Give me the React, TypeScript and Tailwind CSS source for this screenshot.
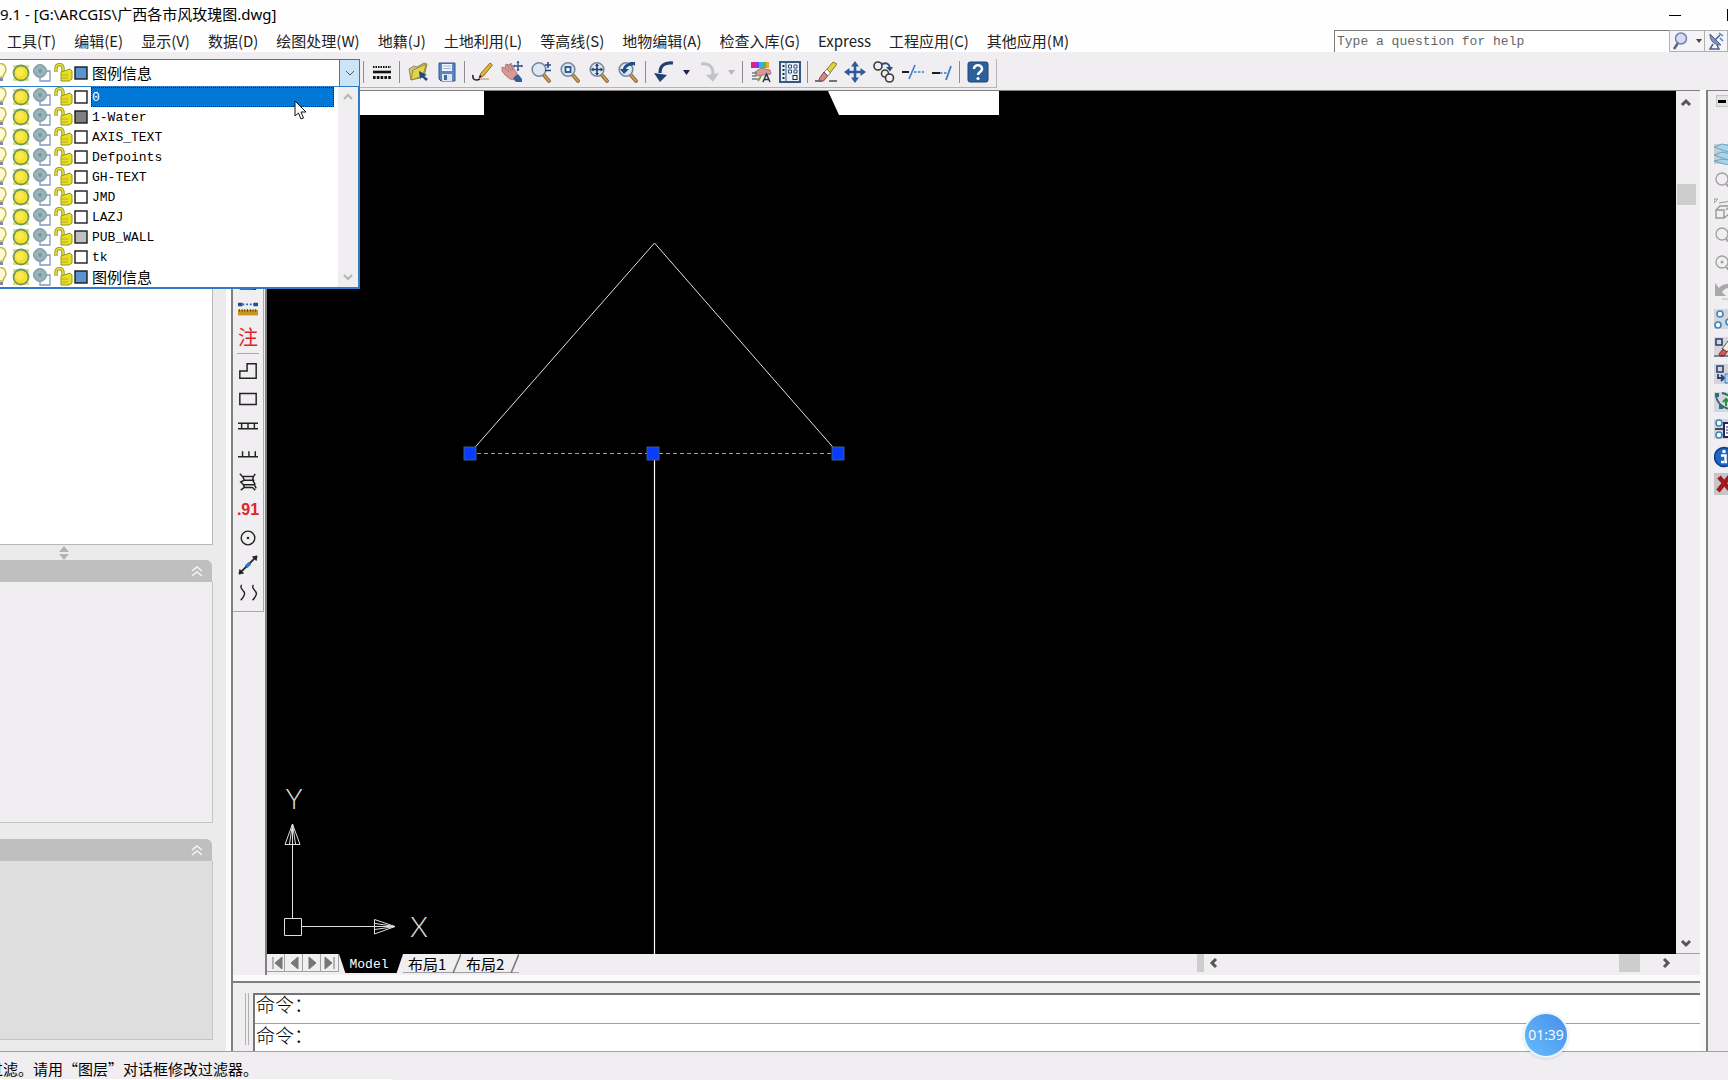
import React, { useState } from 'react';

type Layer = { name: string; color: string; cjk?: boolean };

const layers: Layer[] = [
  { name: '0', color: '#ffffff' },
  { name: '1-Water', color: '#808080' },
  { name: 'AXIS_TEXT', color: '#ffffff' },
  { name: 'Defpoints', color: '#ffffff' },
  { name: 'GH-TEXT', color: '#ffffff' },
  { name: 'JMD', color: '#ffffff' },
  { name: 'LAZJ', color: '#ffffff' },
  { name: 'PUB_WALL', color: '#c0c0c0' },
  { name: 'tk', color: '#ffffff' },
  { name: '图例信息', color: '#5b94cf', cjk: true },
];

const menus = [
  '工具(T)', '编辑(E)', '显示(V)', '数据(D)', '绘图处理(W)', '地籍(J)', '土地利用(L)', '等高线(S)',
  '地物编辑(A)', '检查入库(G)', 'Express', '工程应用(C)', '其他应用(M)',
];

const Svg: React.FC<{ size?: number; children: React.ReactNode }> = ({ size = 22, children }) => (
  <svg width={size} height={size} viewBox="0 0 22 22" fill="none" className="shrink-0" aria-hidden="true">
    {children}
  </svg>
);

/* ---------- layer state icons ---------- */

const LayerIcons: React.FC<{ color: string }> = ({ color }) => (
  <span className="-ml-[10px] flex shrink-0 items-center">
    <svg width="21" height="20" viewBox="0 0 21 20" fill="none" aria-hidden="true">
      <path d="M5 7a5 6 0 0 1 11 0c0 3-3 4-3 7H8c0-3-3-4-3-7z" fill="#fffbd0" stroke="#c9b64a" strokeWidth="1.5" />
      <path d="M8 15h5v3H8z" fill="#7d86a5" />
    </svg>
    <svg width="21" height="20" viewBox="0 0 21 20" aria-hidden="true">
      <path d="M2 2h4v3H2zM14 2h4v3h-4zM2 15h4v3H2zM14 15h4v3h-4z" fill="#dfe08a" />
      <circle cx="10" cy="10" r="7.5" fill="#f3e02f" stroke="#6f9a58" strokeWidth="1.8" />
      <circle cx="9" cy="9" r="4" fill="#fbe94e" />
    </svg>
    <svg width="21" height="20" viewBox="0 0 21 20" fill="none" aria-hidden="true">
      <path d="M10 8h8v10H8v-4" fill="#fff" stroke="#8195c4" strokeWidth="1.3" />
      <circle cx="8" cy="8" r="6.5" fill="#93adb5" stroke="#7f9aa8" />
      <path d="M8 3v10M3 8h10M5 5l6 6M11 5l-6 6" stroke="#aac3bd" strokeWidth="1" />
      <circle cx="8" cy="8" r="2" fill="#7896a2" />
    </svg>
    <svg width="21" height="20" viewBox="0 0 21 20" fill="none" aria-hidden="true">
      <path d="M3 9V5a3 3 0 0 1 7 0v5" stroke="#9a9b1c" strokeWidth="3.4" />
      <path d="M3 9V5a3 3 0 0 1 7 0v5" stroke="#e9e64c" strokeWidth="1.4" />
      <path d="M8 9l9-3 2 2v8l-3 2H8z" fill="#e6df24" stroke="#989617" />
      <path d="M9 12h6M9 15h6" stroke="#b5ae18" />
    </svg>
    <svg width="14" height="14" viewBox="0 0 14 14" aria-hidden="true">
      <rect x="1" y="1" width="12" height="12" fill={color} stroke="#1a1a1a" strokeWidth="1.4" />
    </svg>
  </span>
);

/* ---------- top toolbar icons ---------- */

const LineweightIcon = () => (
  <Svg>
    <path d="M2 6h18" stroke="#111" strokeWidth="2" strokeDasharray="1.5 1" />
    <path d="M2 11h18" stroke="#111" strokeWidth="2.6" />
    <path d="M2 16.500h18" stroke="#111" strokeWidth="3" strokeDasharray="2.6 1.200" />
  </Svg>
);

const OpenIcon = () => (
  <Svg>
    <path d="M2 8l5-3 3 1 7-4 3 1-3 13-13 3z" fill="#c9c583" stroke="#8d8a58" />
    <path d="M6 9l13-6-3 12-12 4z" fill="#e3d24c" stroke="#9a8c32" />
    <path d="M12 10l1 8 2-2 4 4 2-2-4-3 3-1z" fill="#23467c" />
  </Svg>
);

const SaveIcon = () => (
  <Svg>
    <path d="M3 2h16v18H5l-2-2z" fill="#5b86bf" stroke="#33598f" />
    <path d="M6 3h10v7H6z" fill="#f1f5fa" />
    <path d="M7 5h8M7 7.500h8" stroke="#9db4d3" />
    <path d="M6 13h10v7H6z" fill="#dbe5f1" />
    <path d="M8 14h3v5H8z" fill="#44699d" />
  </Svg>
);

const PencilIcon = () => (
  <Svg>
    <path d="M1 14c-1 5 3 6 7 4" stroke="#222" strokeWidth="1.600" />
    <path d="M8 18h9" stroke="#d5a49c" strokeWidth="1.600" />
    <path d="M7 17l2-5 9-10 2.500 2-9 11z" fill="#e3b03c" stroke="#94702a" />
    <path d="M7 17l1-3 2 1.500z" fill="#222" />
  </Svg>
);

const PanIcon = () => (
  <Svg>
    <path d="M1 6l3 1 1-4 3 1 2-2 3 6 3 4-2 7-5-1-5-4-3-4z" fill="#d49a97" stroke="#a66c6c" strokeWidth=".8" />
    <path d="M4 7l4 4M6 4l4 6M9 3l3 6" stroke="#a66c6c" strokeWidth=".8" />
    <path d="M12 17l5-4 4 5v3h-6z" fill="#335d9c" />
    <path d="M17 0v10M12.500 5h9" stroke="#2d5691" strokeWidth="1.400" />
    <path d="M17 0l-1.500 2h3zM17 10l-1.500-2h3zM12 5l2-1.500v3zM22 5l-2-1.500v3z" fill="#2d5691" />
  </Svg>
);

const Lens: React.FC<{ children?: React.ReactNode }> = ({ children }) => (
  <Svg>
    <path d="M13 13l6 7" stroke="#7b5a2b" strokeWidth="3.600" strokeLinecap="round" />
    <path d="M14 14l5 6" stroke="#cf9a4b" strokeWidth="2" strokeLinecap="round" />
    <circle cx="9" cy="8.500" r="6.800" fill="#dfe8f2" stroke="#77879c" strokeWidth="1.600" />
    {children}
  </Svg>
);

const ZoomRealtimeIcon = () => (
  <Lens>
    <path d="M15 4h6M18 1v6M15 9.500h6" stroke="#234b87" strokeWidth="1.600" />
  </Lens>
);

const ZoomWindowIcon = () => (
  <Lens>
    <rect x="6.500" y="6" width="5" height="5" fill="#fff" stroke="#23508f" strokeWidth="1.800" />
  </Lens>
);

const ZoomExtentsIcon = () => (
  <Lens>
    <path d="M9 3v11M3.500 8.500h11" stroke="#1f4173" strokeWidth="1.600" />
    <path d="M9 2.500l-2 2.500h4zM9 14.500L7 12h4zM3 8.500l2.500-2v4zM15 8.500l-2.500-2v4z" fill="#1f4173" />
  </Lens>
);

const ZoomPrevIcon = () => (
  <Lens>
    <path d="M7 10c0-4 3-7 9-7" stroke="#1f4b87" strokeWidth="3" />
    <path d="M3 8h9l-5 5z" fill="#1f4b87" />
    <path d="M12 1h6v4z" fill="#1f4b87" />
  </Lens>
);

const UndoIcon = () => (
  <Svg>
    <path d="M20 2C11 1 7 5 7 12" stroke="#1f4275" strokeWidth="3.200" />
    <path d="M1 12l6 9 7-7z" fill="#1f4275" />
  </Svg>
);

const RedoIcon = () => (
  <Svg>
    <path d="M3 3c9-1 12 3 12 10" stroke="#c3c3c6" strokeWidth="3" />
    <path d="M21 12l-6 9-7-7z" fill="#c3c3c6" />
  </Svg>
);

const MatchPropsIcon = () => (
  <Svg>
    <path d="M1 1h4v6H1z" fill="#e0218a" />
    <path d="M5 1h4v6H5z" fill="#7b3ff2" />
    <path d="M9 1h4v6H9z" fill="#29b6e8" />
    <path d="M13 1h3v6h-3z" fill="#45c23e" />
    <path d="M16 1h3v6h-3z" fill="#f2a51e" />
    <path d="M5 11l6-4 9 2 1 4-7 1-8 1z" fill="#d69a95" stroke="#9c5f5f" strokeWidth=".8" />
    <path d="M2 12h5M2 15h4M2 18h6" stroke="#6d7f8c" strokeWidth="1.500" />
    <path d="M8 20l3-5" stroke="#7f9f3d" strokeWidth="2" />
    <path d="M13 21l3.500-8 3.500 8M14 18.500h5" stroke="#26324d" strokeWidth="1.500" />
  </Svg>
);

const PaletteIcon = () => (
  <Svg>
    <rect x="1" y="1" width="20" height="20" fill="#e9f0f7" stroke="#35597f" strokeWidth="2" />
    <path d="M7 2v18" stroke="#35597f" />
    <path d="M4.500 4v15" stroke="#1d2b3d" strokeWidth="2" strokeDasharray="2 2" />
    <path d="M9.500 4h3v3h-3zM15 4h3v3h-3zM9.500 9h3v3h-3zM15 9h3v3h-3z" fill="#fff" stroke="#2c4f80" />
    <rect x="14" y="14.500" width="4" height="4" fill="#fff" stroke="#222" />
  </Svg>
);

const EraseIcon = () => (
  <Svg>
    <path d="M0 20h7M14 20h8" stroke="#4d4d4d" strokeWidth="1.400" />
    <path d="M12 8l6-7 4 2-7 9z" fill="#e6cf3c" stroke="#8f7d22" />
    <path d="M9 11l3-3 3.500 4-3 3z" fill="#fbfbfb" stroke="#666" strokeWidth=".8" />
    <path d="M4 18l5-7 3.500 4-4 5H5z" fill="#d08a80" stroke="#7d4640" />
  </Svg>
);

const MoveIcon = () => (
  <Svg>
    <path d="M11 3v16M3 11h16" stroke="#2c5c9a" strokeWidth="2.600" />
    <path d="M11 0L7 5.500h8zM11 22l-4-5.500h8zM0 11l5.500-4v8zM22 11l-5.500-4v8z" fill="#2c5c9a" />
  </Svg>
);

const CopyIcon = () => (
  <Svg>
    <circle cx="5" cy="5" r="4" stroke="#3a3a3a" strokeWidth="1.600" />
    <circle cx="12" cy="12.500" r="3.500" stroke="#3a3a3a" strokeWidth="1.600" />
    <circle cx="16.500" cy="17" r="4" fill="#f0eef0" stroke="#3a3a3a" strokeWidth="1.600" />
    <path d="M9 3c5-2 7 0 8 4" stroke="#24508e" strokeWidth="2" />
    <path d="M13 6h7l-3 4.500z" fill="#24508e" />
  </Svg>
);

const TrimIcon = () => (
  <Svg>
    <path d="M0 11h7" stroke="#1d1d1d" strokeWidth="2" />
    <path d="M7 18l6-14" stroke="#3b7cc9" strokeWidth="1.600" />
    <path d="M12 11h10" stroke="#3b7cc9" strokeWidth="1.600" strokeDasharray="2.500 1.500" />
  </Svg>
);

const ExtendIcon = () => (
  <Svg>
    <path d="M1 12h8" stroke="#1d1d1d" strokeWidth="2" />
    <path d="M9 12h7" stroke="#3b7cc9" strokeWidth="1.600" strokeDasharray="2.500 1.500" />
    <path d="M15 19l5-14" stroke="#3b7cc9" strokeWidth="1.800" />
  </Svg>
);

const HelpIcon = () => (
  <Svg>
    <rect x="1" y="1" width="20" height="20" rx="2" fill="#2b609d" stroke="#1c4679" />
    <path d="M7 8c0-5 8-5 8 0 0 3-4 3-4 6" stroke="#fff" strokeWidth="2.600" />
    <circle cx="11" cy="17.500" r="1.600" fill="#fff" />
  </Svg>
);

/* ---------- drawing toolbar icons ---------- */

const drawTools: { label: string; icon: React.ReactNode }[] = [
  { label: '多点房屋', icon: <Svg size={20}><path d="M2 19V11h8V3h10v16z" stroke="#222" strokeWidth="1.600" /></Svg> },
  { label: '四点房屋', icon: <Svg size={20}><path d="M2 5h18v12H2z" stroke="#222" strokeWidth="1.600" /></Svg> },
  { label: '依比例围墙', icon: <Svg size={20}><path d="M0 8h22M0 14h22M4 8v6M11 8v6M18 8v6" stroke="#222" strokeWidth="1.600" /></Svg> },
  { label: '陡坎', icon: <Svg size={20}><path d="M0 14h22M5 14V8M12 14V8M19 14V8" stroke="#222" strokeWidth="1.600" /></Svg> },
  {
    label: '电力线',
    icon: (
      <Svg size={20}>
        <path d="M2 2l3 3h12l2-3M5 5l2 4h11M7 9l-4 2 3 3h12l2 4M17 5l-1 4 3 5M6 14l1 3h9M3 20l4-3M16 17l3 3" stroke="#222" strokeWidth="1.600" />
      </Svg>
    ),
  },
  { label: '高程点', icon: <span className="font-['Liberation_Sans_Narrow','Liberation_Sans',sans-serif] text-base font-bold leading-4 text-[#e0242b]">.91</span> },
  { label: '控制点', icon: <Svg size={20}><circle cx="11" cy="11" r="7.500" stroke="#222" strokeWidth="1.500" /><circle cx="11" cy="11" r="1.400" fill="#222" /></Svg> },
  {
    label: '查询距离',
    icon: (
      <Svg size={20}>
        <path d="M2 20L20 2" stroke="#222" strokeWidth="2" />
        <path d="M1 21l1-5 4 4zM21 1l-1 5-4-4z" fill="#222" stroke="#222" />
        <path d="M9 13l4-4" stroke="#2f78c4" strokeWidth="4" />
      </Svg>
    ),
  },
  {
    label: '自然斜坡',
    icon: (
      <Svg size={20}>
        <path d="M4 2c-4 5 5 6 3 11-1 3-2 4-4 6M17 2c-4 5 5 6 3 11-1 3-2 4-4 6" stroke="#222" strokeWidth="1.500" />
      </Svg>
    ),
  },
];

/* ---------- right palette icons, cut by the window edge ---------- */

const grayLens = (
  <>
    <circle cx="8" cy="9" r="6" stroke="#a3a3a3" strokeWidth="1.400" />
    <path d="M12 14l4 4" stroke="#a3a3a3" strokeWidth="2" />
  </>
);

const paletteTools: { label: string; icon: React.ReactNode }[] = [
  {
    label: '图层',
    icon: <><path d="M0 1h22v20H0z" fill="#c9cdd2" /><path d="M0 4l8-3 14 3-8 5zM0 12l8-3 14 3-8 5zM0 18l9-2 13 2-8 4z" fill="#a8d5ec" stroke="#6ba3c4" /></>,
  },
  { label: '缩放', icon: grayLens },
  { label: '视图', icon: <><path d="M2 12h8v8H2zM2 12l4-4h10l-4 4M10 20l5-4" stroke="#999" strokeWidth="1.400" /><path d="M0 1h4L0 5zM5 5l12-2" stroke="#999" /></> },
  { label: '窗口缩放', icon: grayLens },
  { label: '中心缩放', icon: <>{grayLens}<circle cx="8" cy="9" r="1.500" fill="#a3a3a3" /></> },
  { label: '返回', icon: <><path d="M1 3v13h11l-4-4c2-3 6-5 12-4V4C14 3 8 4 5 8z" fill="#a9a9a9" /><path d="M8 19h14" stroke="#bbb" /></> },
  {
    label: '节点',
    icon: <><path d="M0 1h22v20H0z" fill="#d3d6da" /><circle cx="6" cy="6" r="3" fill="#fff" stroke="#3d83bd" strokeWidth="1.600" /><circle cx="15" cy="14" r="3" fill="#fff" stroke="#3d83bd" strokeWidth="1.600" /><circle cx="4" cy="17" r="3" fill="#fff" stroke="#3d83bd" strokeWidth="1.600" /></>,
  },
  {
    label: '删除',
    icon: <><path d="M0 1h22v20H0z" fill="#d3d6da" /><path d="M2 3h6v6H2z" stroke="#2c3e73" strokeWidth="1.600" /><path d="M8 13l6-8 6 2-7 9z" fill="#f4efe0" stroke="#555" /><path d="M5 18l4-5 4 3-3 4H6z" fill="#d2555c" stroke="#7d3036" /><path d="M0 20h22" stroke="#333" /></>,
  },
  {
    label: '移动',
    icon: <><path d="M0 1h22v20H0z" fill="#d3d6da" /><path d="M3 3h6v6H3z" stroke="#2c3e73" strokeWidth="1.600" /><path d="M4 11v4h5M7 12l3 3-3 3" stroke="#2c3e73" strokeWidth="1.800" /><path d="M11 11h11v9H11z" fill="#a9d3ee" stroke="#3f7fb8" /></>,
  },
  {
    label: '弧段',
    icon: <><path d="M0 1h22v20H0z" fill="#d3d6da" /><path d="M2 3c0 8 6 14 14 15M8 2c6 1 10 5 12 10" stroke="#33646d" strokeWidth="1.800" /><path d="M1 2h4v4H1zM5 14h4v4H5z" fill="#2a6f86" /><path d="M12 15V8M9 11l3-3 3 3" stroke="#2c9243" strokeWidth="2" /></>,
  },
  {
    label: '属性表',
    icon: <><path d="M0 1h22v20H0z" fill="#d3d6da" /><circle cx="5" cy="5" r="3" fill="#fff" stroke="#3d83bd" strokeWidth="1.600" /><circle cx="5" cy="17" r="3" fill="#fff" stroke="#3d83bd" strokeWidth="1.600" /><path d="M1 11h8" stroke="#222" strokeWidth="1.600" /><path d="M10 5h12v14H10z" fill="#fff" stroke="#1c2d66" strokeWidth="2" /><path d="M12 9h8M12 12h8M12 15h8" stroke="#222" /></>,
  },
  {
    label: '信息',
    icon: <><circle cx="10" cy="11" r="9.500" fill="#1f63c7" stroke="#0e3a86" strokeWidth="1.500" /><circle cx="10" cy="5.500" r="1.800" fill="#fff" /><path d="M7 9.500h4.500V16H13M7 16h3" stroke="#fff" strokeWidth="2.400" /></>,
  },
  { label: '关闭', icon: <><path d="M0 0h22v22H0z" fill="#c6c4c6" /><path d="M5 4l11 13M16 3L4 18" stroke="#a3181c" strokeWidth="4.500" /></> },
];

/* ---------- small parts ---------- */

const Separator = () => (
  <span className="flex w-[7px] shrink-0 justify-center">
    <span className="h-[22px] w-px bg-[#8c8c8c]"></span>
  </span>
);

const ToolButton: React.FC<{ label: string; children: React.ReactNode }> = ({ label, children }) => (
  <button type="button" aria-label={label} className="flex h-7 w-[29px] shrink-0 items-center justify-center hover:bg-[#dcdcdc]">
    {children}
  </button>
);

const Chevron: React.FC<{ d: string; color?: string; thick?: number }> = ({ d, color = '#555', thick = 2 }) => (
  <svg width="12" height="12" viewBox="0 0 12 12" fill="none" aria-hidden="true">
    <path d={d} stroke={color} strokeWidth={thick} />
  </svg>
);

const UP = 'M2 8l4-4 4 4';
const DOWN = 'M2 4l4 4 4-4';
const LEFT = 'M8 2L4 6l4 4';
const RIGHT = 'M4 2l4 4-4 4';

const PanelHeader: React.FC<{ label: string }> = ({ label }) => (
  <button type="button" aria-label={label} className="flex h-[22px] w-[212px] items-center justify-end rounded-tr-md bg-[#bfbfbf] pr-2">
    <svg width="14" height="14" viewBox="0 0 14 14" fill="none" aria-hidden="true">
      <path d="M2 7l5-4 5 4M2 12l5-4 5 4" stroke="#f5f5f5" strokeWidth="1.600" />
    </svg>
  </button>
);

const LayerCombo: React.FC = () => {
  const [current, setCurrent] = useState('图例信息');
  const [hovered, setHovered] = useState('0');
  const [open, setOpen] = useState(true);
  const color = layers.find((l) => l.name === current)?.color ?? '#ffffff';

  return (
    <div className="relative h-[28px] w-[360px] shrink-0 border-y border-r border-[#2f7cc4] bg-white">
      <div className="flex h-full items-center">
        <LayerIcons color={color} />
        <select
          aria-label="图层"
          value={current}
          onChange={(e) => setCurrent(e.target.value)}
          className="h-full min-w-0 flex-1 appearance-none bg-white pl-1 text-[15px] text-black outline-none"
        >
          {layers.map((l) => (
            <option key={l.name}>{l.name}</option>
          ))}
        </select>
        <button
          type="button"
          aria-label="展开图层列表"
          onClick={() => setOpen(!open)}
          className="flex h-full w-5 items-center justify-center border-l border-[#2f7cc4] bg-[#cce4f7]"
        >
          <Chevron d={DOWN} thick={1} />
        </button>
      </div>

      {open && (
        <div className="absolute left-0 top-[27px] z-20 flex w-[360px] border-b-2 border-r-2 border-[#2f7cc4] bg-white text-black">
          <ul className="min-w-0 flex-1">
            {layers.map((l) => (
              <li key={l.name} className="flex h-5 items-center">
                <LayerIcons color={l.color} />
                <button
                  type="button"
                  onMouseEnter={() => setHovered(l.name)}
                  onClick={() => setCurrent(l.name)}
                  className={
                    hovered === l.name
                      ? "ml-[3px] mr-1 h-5 flex-1 border border-dotted border-[#222] bg-[#0078d7] text-left font-['Liberation_Mono','Noto_Sans_CJK_SC',monospace] text-[13px] leading-5 text-white"
                      : l.cjk
                        ? 'ml-1 mr-1 flex-1 text-left text-[15px] leading-5'
                        : "ml-1 mr-1 h-5 flex-1 text-left font-['Liberation_Mono','Noto_Sans_CJK_SC',monospace] text-[13px] leading-[22px]"
                  }
                >
                  {l.name}
                </button>
              </li>
            ))}
          </ul>
          <div className="flex w-5 flex-col items-center justify-between bg-[#f0eef0] py-1">
            <Chevron d={UP} color="#b5b5b5" />
            <Chevron d={DOWN} color="#b5b5b5" />
          </div>
        </div>
      )}
    </div>
  );
};

const Grip: React.FC<{ x: number; y: number }> = ({ x, y }) => (
  <rect x={x - 6} y={y - 6} width="12" height="13" fill="#0a3cff" stroke="#3d5a8c" />
);

const Drawing: React.FC = () => (
  <svg width="100%" height="863" fill="none" className="block" aria-label="绘图区">
    <path d="M93 0h124v24H93zM561 0h171v24H572z" fill="#fff" />
    <path d="M203 362L387.500 152 571 362" stroke="#e0e0e0" />
    <path d="M387.500 362v501" stroke="#fff" strokeWidth="1.200" />
    <path d="M203 362.500h368" stroke="#9ca0bb" strokeDasharray="4 3" />
    <Grip x={203} y={362} />
    <Grip x={386} y={362} />
    <Grip x={571} y={362} />

    <g stroke="#e0e0e0">
      <path d="M17.500 827.500h17v17h-17zM25.500 827v-73M34 835.500h73" />
      <path d="M25.500 733l-7.500 20.500h15zM25.500 733l-3 20M25.500 733l3 20M25.500 733v20" />
      <path d="M128 835.500l-20.500-7v14.500zM128 835.500l-20-3M128 835.500l-20 3M128 835.500h-20" />
    </g>
    <g fill="#e0e0e0" fontSize="28" fontFamily="Lato, sans-serif" fontWeight="300" textAnchor="middle">
      <text x="27" y="718">Y</text>
      <text x="152" y="846">X</text>
    </g>
  </svg>
);

const LayoutTabs: React.FC = () => {
  const nav = [
    { label: '第一个布局', d: 'M4 1v12M13 1v12L6 7z' },
    { label: '上一个布局', d: 'M11 1v12L4 7z' },
    { label: '下一个布局', d: 'M4 1v12l7-6z' },
    { label: '最后一个布局', d: 'M11 1v12M2 1v12l7-6z' },
  ];
  return (
    <div className="flex h-[21px] min-w-0 flex-1 items-start text-black">
      {nav.map((n) => (
        <button key={n.label} type="button" aria-label={n.label} className="flex h-[18px] w-[18px] items-center justify-center border-b border-r border-[#a0a0a0]">
          <svg width="14" height="14" viewBox="0 0 14 14" aria-hidden="true">
            <path d={n.d} fill="#777" stroke="#777" />
          </svg>
        </button>
      ))}
      <button type="button" className="h-[19px] w-[64px] bg-black pr-1 font-['Liberation_Mono',monospace] text-[13px] leading-[22px] text-white [clip-path:polygon(0_0,100%_0,90%_100%,10%_100%)]">
        Model
      </button>
      {['布局1', '布局2'].map((t) => (
        <button key={t} type="button" className="flex h-[19px] w-[58px] items-start justify-between border-b border-[#a0a0a0] pl-[5px] text-[15px] leading-[19px]">
          {t}
          <svg width="9" height="19" viewBox="0 0 9 19" fill="none" aria-hidden="true">
            <path d="M9 0L1 19" stroke="#777" strokeWidth="1.500" />
          </svg>
        </button>
      ))}
    </div>
  );
};

const App: React.FC = () => {
  return (
    <div
      lang="zh-CN"
      className="relative flex min-h-screen flex-col overflow-hidden bg-[#f0eef0] font-['Noto_Sans_CJK_SC','Open_Sans',sans-serif] text-[15px] text-[#222]"
    >
      <header className="flex h-[30px] items-center bg-[#fefefe]">
        <h1 className="flex-1 whitespace-nowrap pb-0.5 font-['Noto_Sans','Noto_Sans_CJK_SC',sans-serif] text-[15px] leading-7 text-black">9.1 - [G:\ARCGIS\广西各市风玫瑰图.dwg]</h1>
        <button type="button" aria-label="最小化" className="mr-[46px] flex h-full w-3 items-center">
          <span className="h-px w-3 bg-black"></span>
        </button>
        <button type="button" aria-label="最大化" className="h-3 w-px bg-black"></button>
      </header>

      <div className="flex h-[22px] items-center bg-[#fefefe]">
        <nav className="flex flex-1 gap-[18px] whitespace-nowrap pl-[7px] text-[15px]">
          {menus.map((m) => (
            <button key={m} type="button" className="leading-[22px] hover:bg-[#cce4f7]">{m}</button>
          ))}
        </nav>
        <input
          type="text"
          aria-label="Type a question for help"
          placeholder="Type a question for help"
          className="h-full w-[335px] border-l border-t border-[#7a7a7a] bg-white pl-0.5 font-['Liberation_Mono',monospace] text-[13px] outline-none placeholder:text-[#666]"
        />
        <button type="button" aria-label="搜索" className="flex h-full w-9 items-center justify-center gap-2 border border-[#b0b0b0] bg-[#f4f4f6]">
          <svg width="16" height="18" viewBox="0 0 16 18" fill="none" aria-hidden="true">
            <path d="M6 11l-4 6" stroke="#5a6488" strokeWidth="2.500" />
            <circle cx="9" cy="6.500" r="5.500" fill="#d5dbf0" stroke="#7580ad" strokeWidth="1.500" />
          </svg>
          <svg width="6" height="4" viewBox="0 0 6 4" aria-hidden="true"><path d="M0 0h6L3 4z" fill="#444" /></svg>
        </button>
        <button type="button" aria-label="通讯中心" className="flex h-full w-[23px] items-center justify-center border-y border-r border-[#b0b0b0] bg-[#f4f4f6]">
          <svg width="18" height="18" viewBox="0 0 18 18" fill="none" aria-hidden="true">
            <path d="M3 2c0 7 4 11 11 11z" fill="#7f93bd" stroke="#4a5d88" />
            <path d="M8 8l5-5M6 12l-3 5h9l-2-4" stroke="#4a5d88" strokeWidth="1.500" />
            <path d="M12 1l4 3M13 6l3 3" stroke="#4a7fc4" strokeWidth="1.500" />
          </svg>
        </button>
      </div>

      <div className="flex h-[38px] items-start pt-[7px]">
        <LayerCombo />
        <div className="flex h-[29px] items-center border-b border-r border-[#b4b4b4] pb-0.5 pr-1">
          <Separator />
          <ToolButton label="线型"><LineweightIcon /></ToolButton>
          <Separator />
          <ToolButton label="打开"><OpenIcon /></ToolButton>
          <ToolButton label="保存"><SaveIcon /></ToolButton>
          <Separator />
          <ToolButton label="编辑"><PencilIcon /></ToolButton>
          <ToolButton label="平移"><PanIcon /></ToolButton>
          <ToolButton label="实时缩放"><ZoomRealtimeIcon /></ToolButton>
          <ToolButton label="窗口缩放"><ZoomWindowIcon /></ToolButton>
          <ToolButton label="全图"><ZoomExtentsIcon /></ToolButton>
          <ToolButton label="前一视图"><ZoomPrevIcon /></ToolButton>
          <Separator />
          <ToolButton label="撤销"><UndoIcon /></ToolButton>
          <button type="button" aria-label="撤销列表" className="flex h-7 w-4 items-center justify-center">
            <svg width="7" height="5" viewBox="0 0 7 5" aria-hidden="true"><path d="M0 0h7L3.500 5z" fill="#1d2452" /></svg>
          </button>
          <ToolButton label="重做"><RedoIcon /></ToolButton>
          <button type="button" aria-label="重做列表" className="flex h-7 w-4 items-center justify-center">
            <svg width="7" height="5" viewBox="0 0 7 5" aria-hidden="true"><path d="M0 0h7L3.500 5z" fill="#b8b8b8" /></svg>
          </button>
          <Separator />
          <ToolButton label="特性匹配"><MatchPropsIcon /></ToolButton>
          <ToolButton label="特性"><PaletteIcon /></ToolButton>
          <Separator />
          <ToolButton label="删除"><EraseIcon /></ToolButton>
          <ToolButton label="移动"><MoveIcon /></ToolButton>
          <ToolButton label="复制"><CopyIcon /></ToolButton>
          <ToolButton label="修剪"><TrimIcon /></ToolButton>
          <ToolButton label="延伸"><ExtendIcon /></ToolButton>
          <Separator />
          <ToolButton label="帮助"><HelpIcon /></ToolButton>
        </div>
      </div>

      <div className="flex flex-1">
        {/* property palette */}
        <aside className="flex w-[226px] shrink-0 flex-col bg-[#ebebeb] pb-[11px]">
          <div className="h-[455px] w-[213px] border-b border-r border-[#b8b8b8] bg-white"></div>
          <div className="flex h-[15px] w-[127px] items-center justify-center">
            <svg width="10" height="14" viewBox="0 0 10 14" aria-hidden="true">
              <path d="M5 0l5 6H0zM5 14l5-6H0z" fill="#b3b3b3" />
            </svg>
          </div>
          <PanelHeader label="折叠面板一" />
          <div className="h-[241px] w-[213px] border-b border-r border-[#c4c4c4] bg-[#f0eef0]"></div>
          <div className="h-4"></div>
          <PanelHeader label="折叠面板二" />
          <div className="w-[213px] flex-1 border-b border-r border-[#c4c4c4] bg-[#dedede]"></div>
        </aside>
        <div className="w-[5px] shrink-0 bg-[#fbfbfb]"></div>

        <main className="flex min-w-0 flex-1 flex-col border-l-2 border-[#808080]">
          <div className="flex flex-1">
            <div className="w-[31px] shrink-0">
              <div className="flex flex-col items-center border-b border-r border-[#a8a8a8] pb-1 pt-[177px]">
                <button type="button" aria-label="查询坐标" className="flex h-7 w-7 items-center justify-center">
                  <Svg size={20}><path d="M2 20h14l4-4v5H2z" fill="#1d3f7a" /></Svg>
                </button>
                <button type="button" aria-label="查询长度" className="flex h-7 w-7 items-center justify-center">
                  <Svg size={20}>
                    <path d="M1 6h20" stroke="#2a66b0" strokeWidth="2" strokeDasharray="2 2" />
                    <path d="M0 4h5v4H0zM17 4h5v4h-5z" fill="#1d4f94" />
                    <path d="M0 12h22v6H0z" fill="#c9951e" />
                    <path d="M1 12.500h20" stroke="#5c430d" strokeWidth="3" strokeDasharray="1 2" />
                  </Svg>
                </button>
                <button type="button" className="h-[27px] w-7 text-xl leading-6 text-[#e0242b]">注</button>
                <span className="my-[3px] h-px w-[22px] bg-[#a8a8a8]"></span>
                <div className="grid h-[250px] grid-rows-9">
                  {drawTools.map((t) => (
                    <button key={t.label} type="button" aria-label={t.label} className="flex w-7 items-center justify-center">
                      {t.icon}
                    </button>
                  ))}
                </div>
              </div>
            </div>

            <div className="ml-px flex min-w-0 flex-1 flex-col">
              <div className="flex flex-1 border-l-2 border-t border-[#808080]">
                <div className="min-w-0 flex-1 bg-black">
                  <Drawing />
                </div>
                <div className="flex w-6 shrink-0 flex-col items-center border-b border-[#a0a0a0] pb-1 pr-1 pt-[6px]">
                  <Chevron d={UP} thick={3} />
                  <div className="mt-[75px] h-[21px] w-[19px] bg-[#cdcdcd]"></div>
                  <div className="mt-auto flex"><Chevron d={DOWN} thick={3} /></div>
                </div>
              </div>
              <div className="flex h-[21px] items-start border-l-2 border-[#808080]">
                <LayoutTabs />
                <div className="flex h-[18px] w-[503px] items-center">
                  <span className="h-[18px] w-[7px] bg-[#cdcdcd]"></span>
                  <span className="ml-1 flex w-3"><Chevron d={LEFT} thick={3} /></span>
                  <span className="ml-auto h-[18px] w-[21px] bg-[#cdcdcd]"></span>
                  <span className="ml-5 mr-7 flex w-3"><Chevron d={RIGHT} thick={3} /></span>
                </div>
              </div>
            </div>
          </div>
          <div className="h-[6px] bg-[#fbfbfb]"></div>
          <div className="flex h-[70px] border-t-2 border-[#808080] pl-3 pt-[10px]">
            <div className="mr-1 flex h-[52px] w-1 border-x border-[#b0b0b0]"></div>
            <div className="min-w-0 flex-1 border-l-2 border-t-2 border-[#757575] bg-white font-['Noto_Sans_CJK_SC',sans-serif] text-[19px] font-light text-black">
              <p className="h-[29px] border-b border-[#a0a0a0] pl-px leading-[18px]">命令：</p>
              <div className="flex h-[27px] items-start pl-px">
                <label htmlFor="command" className="leading-[22px]">命令：</label>
                <input id="command" type="text" className="h-6 min-w-0 flex-1 bg-white outline-none" />
              </div>
            </div>
          </div>
        </main>

        <div className="w-[6px] shrink-0 bg-[#fbfbfb]"></div>
        <aside className="w-[22px] shrink-0 overflow-hidden border-l-2 border-t border-[#808080]">
          <button type="button" aria-label="收起工具栏" className="ml-2 mt-1 flex h-3 w-4 items-center justify-start border border-[#c4c4c4] bg-[#e2e2e2]">
            <span className="ml-px h-[3px] w-2 bg-black"></span>
          </button>
          <div className="ml-[6px] mt-[33px] grid h-[358px] grid-rows-13">
            {paletteTools.map((t) => (
              <button key={t.label} type="button" aria-label={t.label} className="flex items-center">
                <Svg>{t.icon}</Svg>
              </button>
            ))}
          </div>
        </aside>
      </div>

      <footer className="h-[30px] border-t border-[#a0a0a0]">
        <p className="-ml-3 h-[27px] whitespace-nowrap text-[15px] leading-[33px] text-black">过滤。请用“图层”对话框修改过滤器。</p>
        <div className="h-0.5 w-[393px] bg-white"></div>
      </footer>

      {/* mouse pointer */}
      <svg width="14" height="20" viewBox="0 0 14 20" className="absolute left-[294px] top-[100px] z-30" aria-hidden="true">
        <path d="M1 1v15l3.500-3 2.500 6 2.500-1-2.500-6H12z" fill="#fff" stroke="#111" />
      </svg>

      <button
        type="button"
        className="absolute bottom-[23px] right-[159px] z-30 h-[46px] w-[46px] rounded-full border-2 border-[#e6f6ff] bg-linear-to-tr from-[#66bdfb] to-[#4a8dea] font-['Open_Sans',sans-serif] text-sm text-white shadow"
      >
        01:39
      </button>
    </div>
  );
};

export default App;
